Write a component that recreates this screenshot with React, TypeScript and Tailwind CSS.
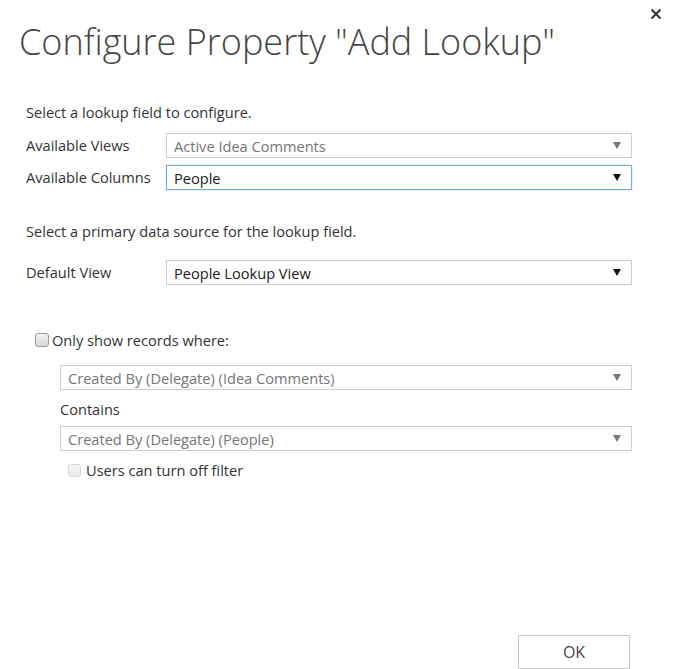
import React from "react";

const font = "font-['Open_Sans','Liberation_Sans',sans-serif]";

type SelectProps = {
  value: string;
  disabled?: boolean;
  focused?: boolean;
  className?: string;
};

const Arrow = ({ disabled }: { disabled?: boolean }) => (
  <svg width="8" height="7" viewBox="0 0 8 7" className="shrink-0">
    <polygon points="0,0 8,0 4,7" fill={disabled ? "#777" : "#111"} />
  </svg>
);

const FakeSelect = ({ value, disabled, focused, className }: SelectProps) => (
  <div
    className={
      "flex items-center h-[25px] pl-[7px] pr-[10px] bg-white border text-[14.6px] " +
      (focused ? "border-[#7aa7e8] shadow-[0_0_1px_#7aa7e8] " : "border-[#cdcdcd] ") +
      (disabled ? "text-[#767676] " : "text-[#1a1a1a] ") +
      (className ?? "")
    }
  >
    <span className="flex-1 truncate leading-[20px]">{value}</span>
    <Arrow disabled={disabled} />
  </div>
);

const Checkbox = ({ disabled }: { disabled?: boolean }) => (
  <span
    className={
      "inline-block shrink-0 rounded-[3px] border " +
      (disabled
        ? "w-[13px] h-[13px] border-[#d6d6d6] bg-gradient-to-b from-[#f7f7f7] to-[#e9e9e9]"
        : "w-[14px] h-[14px] border-[#9a9a9a] bg-gradient-to-b from-[#f2f2f2] to-[#d8d8d8]")
    }
  />
);

const Row = ({ label, children }: { label: string; children: React.ReactNode }) => (
  <div className="flex items-center">
    <span className="w-[140px] shrink-0 text-[14.6px] text-[#333]">{label}</span>
    <div className="flex-1">{children}</div>
  </div>
);

export default function App() {
  return (
    <div className={`relative h-[669px] overflow-hidden bg-white ${font}`}>
      <button className="absolute right-[12px] top-[8px] text-[#333]" aria-label="Close">
        <svg width="12" height="12" viewBox="0 0 12 12">
          <path d="M1.5 1.5 L10.5 10.5 M10.5 1.5 L1.5 10.5" stroke="#333" strokeWidth="2" />
        </svg>
      </button>

      <div className="flex flex-col pt-[20px] pl-[19px] pr-[42px]">
        <h1 className="text-[36px] leading-[44px] font-light text-[#444]">
          Configure Property "Add Lookup"
        </h1>

        <div className="flex flex-col pl-[7px]">
          <p className="mt-[38px] text-[14.6px] leading-[20px] text-[#333]">
            Select a lookup field to configure.
          </p>

          <div className="mt-[11px] flex flex-col gap-[7px]">
            <Row label="Available Views">
              <FakeSelect value="Active Idea Comments" disabled />
            </Row>
            <Row label="Available Columns">
              <FakeSelect value="People" focused />
            </Row>
          </div>

          <p className="mt-[31px] text-[14.6px] leading-[20px] text-[#333]">
            Select a primary data source for the lookup field.
          </p>

          <div className="mt-[19px]">
            <Row label="Default View">
              <FakeSelect value="People Lookup View" />
            </Row>
          </div>

          <div className="mt-[45px] flex items-center pl-[9px]">
            <Checkbox />
            <span className="ml-[3px] text-[14.6px] leading-[20px] text-[#333]">
              Only show records where:
            </span>
          </div>

          <div className="flex flex-col pl-[34px]">
            <FakeSelect className="mt-[15px]" value="Created By (Delegate) (Idea Comments)" disabled />
            <span className="mt-[9px] text-[14.6px] leading-[20px] text-[#333]">Contains</span>
            <FakeSelect className="mt-[7px]" value="Created By (Delegate) (People)" disabled />
            <div className="mt-[9px] flex items-center pl-[8px]">
              <Checkbox disabled />
              <span className="ml-[5px] text-[14.6px] leading-[20px] text-[#333]">
                Users can turn off filter
              </span>
            </div>
          </div>
        </div>
      </div>

      <div className="flex justify-end pr-[44px] mt-[155px]">
        <button className="w-[112px] h-[34px] border border-[#c8c8c8] bg-white text-[16px] text-[#444]">
          OK
        </button>
      </div>
    </div>
  );
}
